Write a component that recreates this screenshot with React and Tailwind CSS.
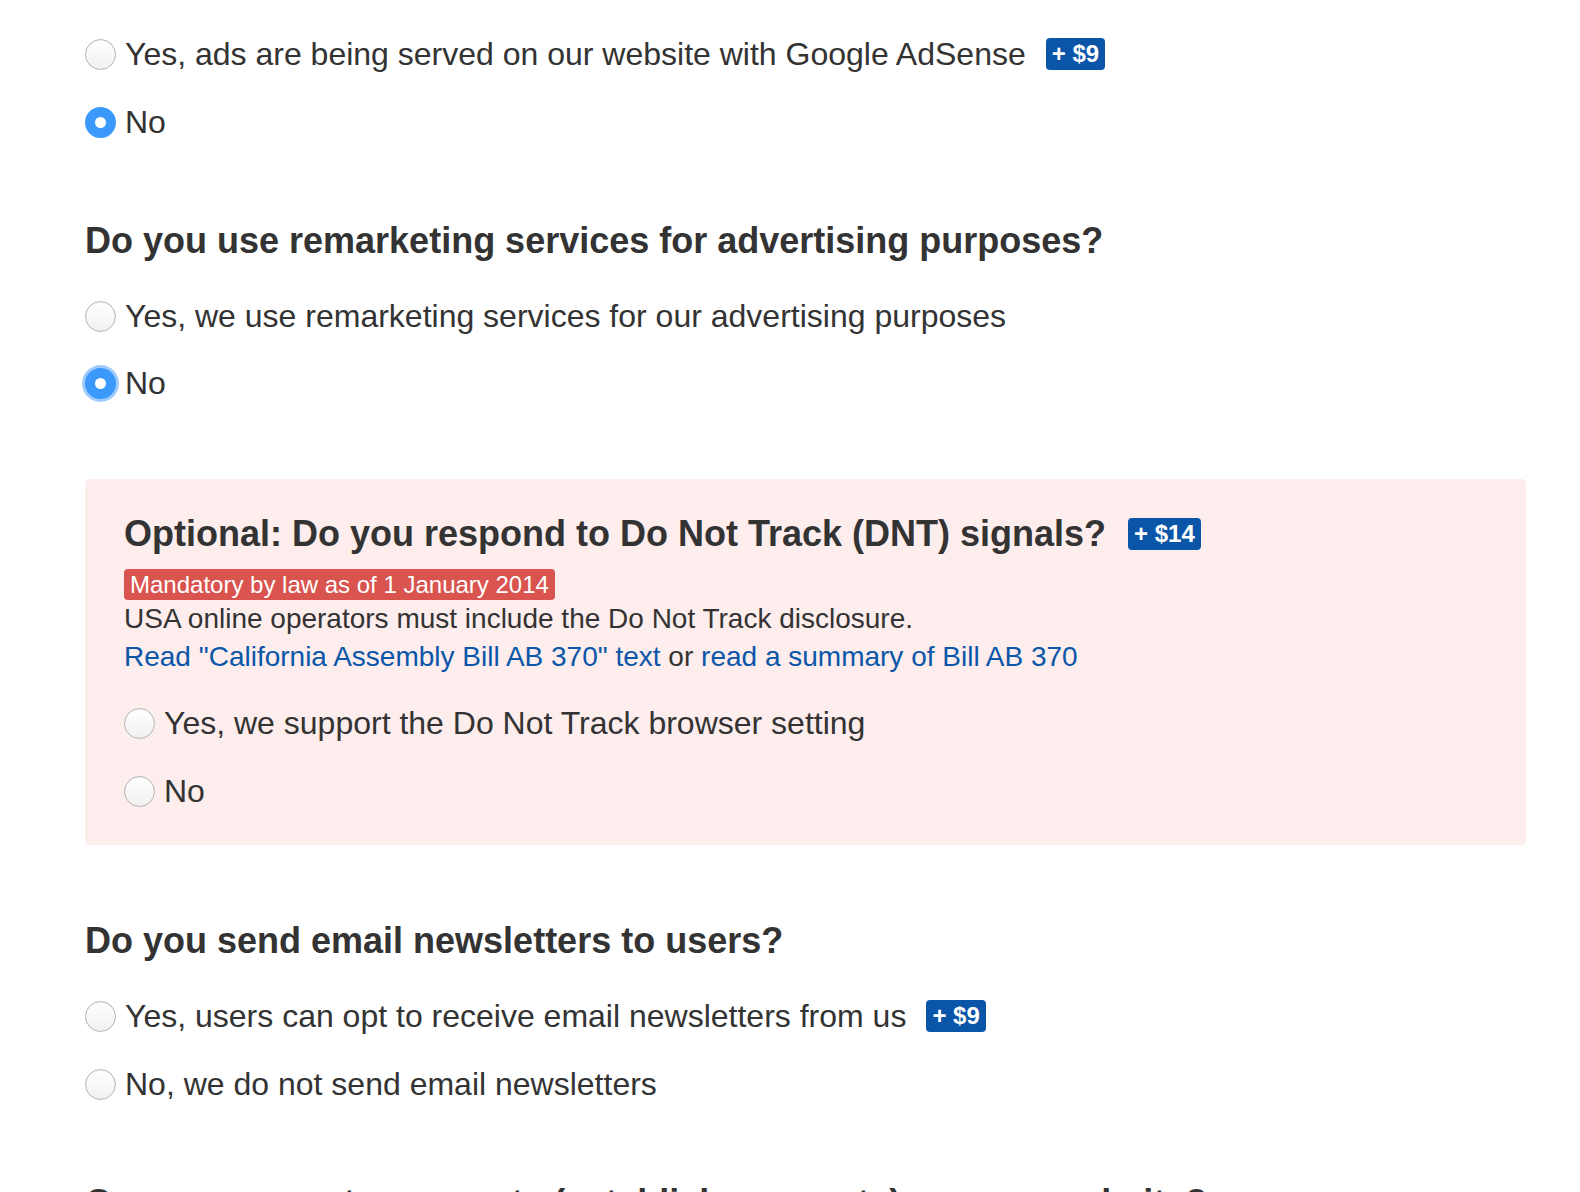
import React from 'react';

const Radio = ({ checked, focused }) => {
  if (checked) {
    return (
      <span
        className={`flex h-[31px] w-[31px] shrink-0 items-center justify-center rounded-full bg-[#3b99fc] ${
          focused ? 'shadow-[0_0_0_3px_rgba(80,160,250,0.55)]' : ''
        }`}
      >
        <span className="h-[11px] w-[11px] rounded-full bg-white" />
      </span>
    );
  }
  return (
    <span className="h-[31px] w-[31px] shrink-0 rounded-full border border-[#b4b4b4] bg-gradient-to-b from-white to-[#f1f1f1] shadow-[inset_0_1px_1px_rgba(0,0,0,0.04)]" />
  );
};

const Badge = ({ children }) => (
  <span className="ml-[20px] inline-flex h-[32px] items-center rounded-[4px] bg-[#0a55a8] px-[6px] text-[24px] font-bold leading-none text-white">
    {children}
  </span>
);

const Option = ({ label, checked, focused, badge }) => (
  <label className="flex h-[44px] items-center">
    <Radio checked={checked} focused={focused} />
    <span className="ml-[9px] text-[32px] leading-none text-[#333]">{label}</span>
    {badge && <Badge>{badge}</Badge>}
  </label>
);

const Heading = ({ children }) => (
  <h2 className="flex h-[40px] items-center whitespace-nowrap text-[36px] font-bold leading-none text-[#333]">{children}</h2>
);

export default function App() {
  return (
    <div className="h-[1192px] overflow-hidden bg-white pl-[85px] pr-[54px] pt-[32px] font-['Liberation_Sans',Arial,sans-serif]">
      <div className="flex flex-col gap-[24px]">
        <Option label="Yes, ads are being served on our website with Google AdSense" badge="+ $9" />
        <Option label="No" checked />
      </div>

      <div className="mt-[77px]">
        <Heading>Do you use remarketing services for advertising purposes?</Heading>
      </div>
      <div className="mt-[33px] flex flex-col gap-[23px]">
        <Option label="Yes, we use remarketing services for our advertising purposes" />
        <Option label="No" checked focused />
      </div>

      <div className="mt-[74px] rounded-[5px] bg-[#fdeded] pb-[32px] pl-[39px] pr-[20px] pt-[35px]">
        <h2 className="flex h-[40px] items-center text-[36px] font-bold leading-none text-[#333]">
          Optional: Do you respond to Do Not Track (DNT) signals?
          <span className="ml-[22px] inline-flex h-[32px] items-center rounded-[4px] bg-[#0a55a8] px-[6px] text-[24px] font-bold leading-none text-white">
            + $14
          </span>
        </h2>
        <div className="mt-[15px]">
          <span className="inline-flex h-[31px] items-center rounded-[4px] bg-[#d9534f] px-[6px] text-[24px] leading-none text-white">
            Mandatory by law as of 1 January 2014
          </span>
        </div>
        <p className="text-[28px] leading-[38px] text-[#333]">
          USA online operators must include the Do Not Track disclosure.
        </p>
        <p className="text-[28px] leading-[38px] text-[#333]">
          <a href="#" className="text-[#0a56a8]">Read "California Assembly Bill AB 370" text</a> or{' '}
          <a href="#" className="text-[#0a56a8]">read a summary of Bill AB 370</a>
        </p>
        <div className="mt-[25px] flex flex-col gap-[24px]">
          <Option label="Yes, we support the Do Not Track browser setting" />
          <Option label="No" />
        </div>
      </div>

      <div className="mt-[76px]">
        <Heading>Do you send email newsletters to users?</Heading>
      </div>
      <div className="mt-[33px] flex flex-col gap-[24px]">
        <Option label="Yes, users can opt to receive email newsletters from us" badge="+ $9" />
        <Option label="No, we do not send email newsletters" />
      </div>

      <div className="mt-[77px]">
        <Heading>Can users create accounts (establish accounts) on your website?</Heading>
      </div>
    </div>
  );
}
